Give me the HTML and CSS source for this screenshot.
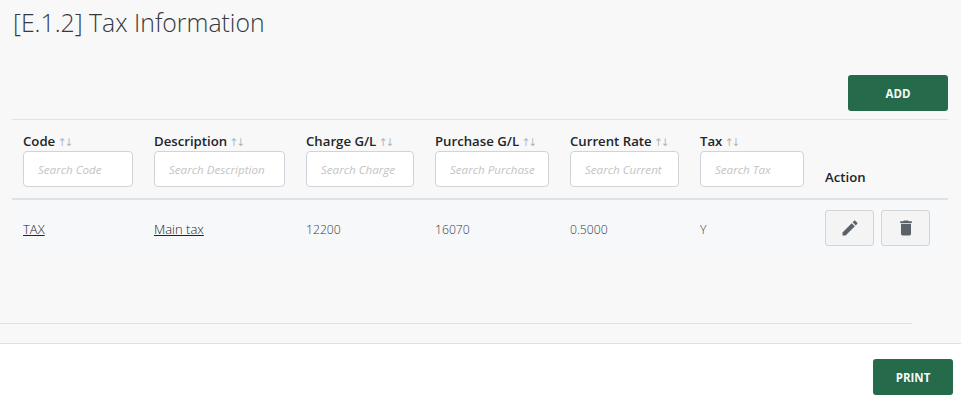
FILE: index.html
```html
<!DOCTYPE html>
<html lang="en">
<head>
  <meta charset="UTF-8">
  <title>[E.1.2] Tax Information</title>
  <link rel="stylesheet" href="styles.css">
</head>
<body>
  <div class="content">
    <h1>[E.1.2] Tax Information</h1>
    <div class="toolbar">
      <button class="green-btn add-btn">ADD</button>
    </div>
    <table class="tax-table">
      <colgroup>
        <col class="col-code">
        <col class="col-desc">
        <col class="col-charge">
        <col class="col-purchase">
        <col class="col-rate">
        <col class="col-tax">
        <col class="col-action">
      </colgroup>
      <thead>
        <tr>
          <th class="first-cell">
            <div class="th-label">Code <span class="sort">↑↓</span></div>
            <input type="text" placeholder="Search Code">
          </th>
          <th>
            <div class="th-label">Description <span class="sort">↑↓</span></div>
            <input type="text" placeholder="Search Description">
          </th>
          <th>
            <div class="th-label">Charge G/L <span class="sort">↑↓</span></div>
            <input type="text" placeholder="Search Charge">
          </th>
          <th>
            <div class="th-label">Purchase G/L <span class="sort">↑↓</span></div>
            <input type="text" placeholder="Search Purchase">
          </th>
          <th>
            <div class="th-label">Current Rate <span class="sort">↑↓</span></div>
            <input type="text" placeholder="Search Current">
          </th>
          <th>
            <div class="th-label">Tax <span class="sort">↑↓</span></div>
            <input type="text" placeholder="Search Tax">
          </th>
          <th class="action-head">Action</th>
        </tr>
      </thead>
      <tbody>
        <tr>
          <td class="first-cell"><a href="#">TAX</a></td>
          <td><a href="#">Main tax</a></td>
          <td>12200</td>
          <td>16070</td>
          <td>0.5000</td>
          <td>Y</td>
          <td>
            <div class="actions">
              <button class="icon-btn" aria-label="Edit">
                <svg width="16" height="16" viewBox="0 0 24 24"><path d="M3 17.25V21h3.75L17.81 9.94l-3.75-3.75L3 17.25zM20.71 7.04a1 1 0 0 0 0-1.41l-2.34-2.34a1 1 0 0 0-1.41 0l-1.83 1.83 3.75 3.75 1.83-1.83z"/></svg>
              </button>
              <button class="icon-btn" aria-label="Delete">
                <svg width="16" height="16" viewBox="0 0 24 24"><path d="M6 19c0 1.1.9 2 2 2h8c1.1 0 2-.9 2-2V7H6v12zM19 4h-3.5l-1-1h-5l-1 1H5v2h14V4z"/></svg>
              </button>
            </div>
          </td>
        </tr>
      </tbody>
    </table>
    <hr class="divider">
  </div>
  <div class="footer">
    <button class="green-btn print-btn">PRINT</button>
  </div>
</body>
</html>
```

FILE: styles.css
```css
html, body {
  height: 100%;
}
body {
  margin: 0;
  display: flex;
  flex-direction: column;
  font-family: "Open Sans", "Noto Sans", sans-serif;
  font-size: 13px;
  color: #212529;
  background-color: #fff;
}
.content {
  height: 343px;
  box-sizing: border-box;
  background-color: #f8f8f8;
  padding-top: 3px;
  overflow: hidden;
}
h1 {
  margin: 0 0 0 13px;
  font-size: 24.8px;
  font-weight: 300;
  line-height: 38px;
  color: #343a40;
}
.toolbar {
  display: flex;
  justify-content: flex-end;
  margin-top: 34px;
  padding-right: 13px;
}
.green-btn {
  border: none;
  border-radius: 3px;
  background-color: #256a4a;
  color: #f4f8f6;
  font-family: inherit;
  font-size: 11.5px;
  font-weight: 700;
  cursor: pointer;
}
.add-btn {
  width: 100px;
  height: 36px;
}
.tax-table {
  width: 936px;
  margin: 8px 0 0 12px;
  table-layout: fixed;
  border-collapse: collapse;
  border-top: 1px solid #e2e2e2;
}
.col-code { width: 132px; }
.col-desc { width: 152px; }
.col-charge { width: 129px; }
.col-purchase { width: 135px; }
.col-rate { width: 130px; }
.col-tax { width: 125px; }
.col-action { width: 133px; }
th {
  padding: 12px 11px 11px 10px;
  text-align: left;
  vertical-align: bottom;
  font-size: 13.2px;
  font-weight: 600;
  color: #212529;
  border-bottom: 2px solid #dee2e6;
}
.th-label {
  height: 19px;
  line-height: 19px;
  white-space: nowrap;
}
.sort {
  margin-left: -1px;
  font-family: "DejaVu Sans", sans-serif;
  font-size: 10.5px;
  font-weight: 400;
  letter-spacing: -2px;
  color: #b0b5ba;
}
th input {
  display: block;
  width: 100%;
  height: 36px;
  box-sizing: border-box;
  padding: 0 4px 0 14px;
  border: 1px solid #ced4da;
  border-radius: 4px;
  background-color: #fff;
  font-family: inherit;
  font-size: 11.6px;
  font-style: italic;
}
th input::placeholder {
  color: #c4c4c4;
  opacity: 1;
}
.action-head {
  padding-bottom: 12px;
}
td {
  height: 57px;
  box-sizing: border-box;
  padding: 2px 11px 0 10px;
  background-color: #f7f8fa;
  font-size: 12.2px;
  font-weight: 300;
  color: #343a40;
}
th.first-cell, td.first-cell {
  padding-left: 11px;
}
td a {
  font-size: 13px;
  color: #212529;
}
.actions {
  display: flex;
  gap: 7px;
  margin-top: -2px;
}
.icon-btn {
  display: flex;
  align-items: center;
  justify-content: center;
  width: 49px;
  height: 36px;
  padding: 0;
  border: 1px solid #d2d4d6;
  border-radius: 3px;
  background-color: #f4f4f4;
  cursor: pointer;
}
.icon-btn svg {
  width: 20px;
  height: 20px;
  fill: #5b626a;
}
.divider {
  width: 912px;
  margin: 67px 0 0;
  border: none;
  border-top: 1px solid #e0e0e0;
}
.footer {
  flex: 1;
  display: flex;
  justify-content: flex-end;
  align-items: flex-start;
  padding: 15px 8px 0 0;
  background-color: #fff;
  border-top: 1px solid #e0e0e0;
}
.print-btn {
  width: 80px;
  height: 36px;
}
```
